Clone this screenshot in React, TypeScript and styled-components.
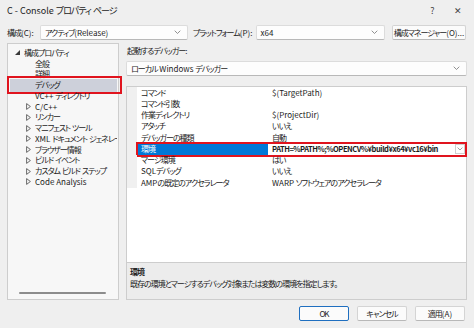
import React from 'react';
import styled, { createGlobalStyle } from 'styled-components';

const GlobalStyle = createGlobalStyle`
  html, body {
    margin: 0;
    padding: 0;
    background: #efefef;
  }
  body {
    font-family: "Noto Sans CJK JP", "Noto Sans", sans-serif;
    font-feature-settings: "palt";
    color: #1b1b1b;
  }
  * {
    box-sizing: border-box;
  }
`;

const Window = styled.div`
  width: 474px;
  height: 328px;
  background: #efefef;
  display: flex;
  flex-direction: column;
  overflow: hidden;
  font-size: 8px;
  letter-spacing: -1px;
  line-height: 1;
`;

// latin runs keep normal spacing, kana/kanji are tightened
const Latin = styled.span`
  letter-spacing: 0;
`;

const T = ({ s }: { s: string }) => (
  <>
    {s.split(/([\x20-\x7E¥]+)/).map((part, i) =>
      i % 2 ? <Latin key={i}>{part}</Latin> : part
    )}
  </>
);

const TitleBar = styled.div`
  height: 22px;
  display: flex;
  align-items: center;
  padding: 0 4px 2px 7px;
  font-size: 9px;
`;

const Title = styled.span`
  flex: 1;
`;

const CaptionButton = styled.span`
  width: 25px;
  text-align: center;
  color: #444;
  font-size: 9px;
  letter-spacing: 0;
`;

const ConfigBar = styled.div`
  height: 21px;
  display: flex;
  align-items: center;
  padding: 0 8px 0 7px;
`;

const Label = styled.span<{ $w?: number; $pad?: number }>`
  flex: none;
  ${p => (p.$w ? `width: ${p.$w}px;` : '')}
  padding: 0 ${p => (p.$w ? 0 : 3)}px 0 ${p => p.$pad ?? 0}px;
  white-space: nowrap;
`;

const Combo = styled.div<{ $w?: number; $grow?: boolean }>`
  flex: ${p => (p.$grow ? '1' : 'none')};
  ${p => (p.$grow ? '' : `width: ${p.$w ? `${p.$w}px` : '100%'};`)}
  height: 15px;
  background: #fdfdfd;
  border: 1px solid #dcdcdc;
  border-bottom-color: #b8b8b8;
  border-radius: 2px;
  display: flex;
  align-items: center;
  padding: 0 6px 0 4px;
  white-space: nowrap;
  span.txt {
    flex: 1;
  }
`;

const Button = styled.div<{ $w: number; $primary?: boolean; $gap?: number }>`
  flex: none;
  width: ${p => p.$w}px;
  height: 15px;
  margin-left: ${p => p.$gap ?? 0}px;
  background: #fbfbfb;
  border: 1px solid ${p => (p.$primary ? '#1f6fc0' : '#d4d4d4')};
  border-bottom-color: ${p => (p.$primary ? '#1f6fc0' : '#b8b8b8')};
  border-radius: 2px;
  display: flex;
  align-items: center;
  justify-content: center;
  white-space: nowrap;
`;

const Main = styled.div`
  height: 257px;
  display: flex;
  gap: 7px;
  padding: 0 7px;
`;

const TreePanel = styled.div`
  width: 112px;
  flex: none;
  background: #f7f7f7;
  border: 1px solid #cdcdcd;
  padding: 3.5px 0 5px;
  display: flex;
  flex-direction: column;
`;

const TreeRow = styled.div<{ $level: number; $selected?: boolean }>`
  position: relative;
  height: 10.75px;
  margin: 0 1px;
  display: flex;
  align-items: center;
  padding-left: ${p => 4 + p.$level * 11}px;
  white-space: nowrap;
  &::before {
    content: '';
    position: absolute;
    left: 1px;
    right: 0;
    top: -1px;
    bottom: -1px;
    background: ${p => (p.$selected ? '#cdd0da' : 'transparent')};
  }
`;

const TreeText = styled.span`
  position: relative;
  overflow: hidden;
  flex: 1;
  min-width: 0;
  line-height: 12px;
`;

const Expander = styled.span`
  position: relative;
  flex: none;
  width: 11px;
  height: 11px;
  display: flex;
  align-items: center;
  justify-content: flex-start;
  padding-left: 2px;
`;

const RedMark = styled.div<{ $t: number; $r: number; $b: number; $l: number }>`
  position: absolute;
  top: ${p => p.$t}px;
  right: ${p => p.$r}px;
  bottom: ${p => p.$b}px;
  left: ${p => p.$l}px;
  border: 2px solid #e0141e;
  pointer-events: none;
`;

const ScrollTrack = styled.div`
  margin: auto 12px 0 11px;
  height: 2px;
  background: #8c8c8c;
  border-radius: 1px;
`;

const RightPane = styled.div`
  flex: 1;
  min-width: 0;
  display: flex;
  flex-direction: column;
`;

const SectionLabel = styled.div`
  height: 15px;
  display: flex;
  align-items: center;
  padding: 0 1px;
  margin-bottom: 3px;
`;

const Grid = styled.div`
  flex: 1;
  margin-top: 10px;
  background: #fff;
  border: 1px solid #cdcdcd;
  border-bottom: none;
`;

const PropRow = styled.div`
  position: relative;
  height: 11.25px;
  display: grid;
  grid-template-columns: 10px 131px 1fr;
  align-items: stretch;
  white-space: nowrap;
`;

const Gutter = styled.div`
  background: #f0f0f0;
`;

const NameCell = styled.div<{ $selected?: boolean }>`
  display: flex;
  align-items: center;
  padding-left: 4px;
  background: ${p => (p.$selected ? '#0078d7' : 'transparent')};
  color: ${p => (p.$selected ? '#fff' : 'inherit')};
`;

const ValueCell = styled.div<{ $selected?: boolean }>`
  display: flex;
  align-items: center;
  padding: 0 1px 0 4px;
  min-width: 0;
  font-weight: ${p => (p.$selected ? 700 : 400)};
  font-size: ${p => (p.$selected ? 7.5 : 8)}px;
  span.txt {
    flex: 1;
  }
  ${Latin} {
    letter-spacing: ${p => (p.$selected ? '-0.45px' : '0')};
  }
`;

const DropBox = styled.span`
  flex: none;
  width: 10px;
  height: 10px;
  border: 1px solid #cfcfcf;
  display: flex;
  align-items: center;
  justify-content: center;
  background: #fff;
`;

const Description = styled.div`
  height: 38px;
  background: #ececec;
  border: 1px solid #cdcdcd;
  padding: 3px 3px;
  display: flex;
  flex-direction: column;
  gap: 1px;
  line-height: 11px;
  b {
    font-weight: 700;
  }
`;

const Footer = styled.div`
  flex: 1;
  display: flex;
  justify-content: flex-end;
  gap: 8px;
  padding: 6px 9px 0 0;
`;

const Chevron = ({ size = 7 }: { size?: number }) => (
  <svg width={size} height={size * 0.6} viewBox="0 0 10 6">
    <polyline points="1,1 5,5 9,1" fill="none" stroke="#7a7a7a" strokeWidth="1.2" />
  </svg>
);

const Collapsed = () => (
  <svg width="5" height="7" viewBox="0 0 5 7">
    <polygon points="0.6,0.6 4.4,3.5 0.6,6.4" fill="none" stroke="#5a5a5a" strokeWidth="0.9" />
  </svg>
);

const Expanded = () => (
  <svg width="5" height="5" viewBox="0 0 5 5">
    <polygon points="5,0 5,5 0,5" fill="#3a3a3a" />
  </svg>
);

type TreeItem = { text: string; level: number; kind?: 'open' | 'closed'; selected?: boolean };

const treeItems: TreeItem[] = [
  { text: '構成プロパティ', level: 0, kind: 'open' },
  { text: '全般', level: 1 },
  { text: '詳細', level: 1 },
  { text: 'デバッグ', level: 1, selected: true },
  { text: 'VC++ ディレクトリ', level: 1 },
  { text: 'C/C++', level: 1, kind: 'closed' },
  { text: 'リンカー', level: 1, kind: 'closed' },
  { text: 'マニフェスト ツール', level: 1, kind: 'closed' },
  { text: 'XML ドキュメント ジェネレーター', level: 1, kind: 'closed' },
  { text: 'ブラウザー情報', level: 1, kind: 'closed' },
  { text: 'ビルド イベント', level: 1, kind: 'closed' },
  { text: 'カスタム ビルド ステップ', level: 1, kind: 'closed' },
  { text: 'Code Analysis', level: 1, kind: 'closed' },
];

const props: [string, string, boolean?][] = [
  ['コマンド', '$(TargetPath)'],
  ['コマンド引数', ''],
  ['作業ディレクトリ', '$(ProjectDir)'],
  ['アタッチ', 'いいえ'],
  ['デバッガーの種類', '自動'],
  ['環境', 'PATH=%PATH%;%OPENCV%¥build¥x64¥vc16¥bin', true],
  ['マージ環境', 'はい'],
  ['SQL デバッグ', 'いいえ'],
  ['AMP の既定のアクセラレータ', 'WARP ソフトウェアのアクセラレータ'],
];

export default function App() {
  return (
    <>
      <GlobalStyle />
      <Window>
        <TitleBar>
          <Title><T s="C - Console プロパティ ページ" /></Title>
          <CaptionButton>?</CaptionButton>
          <CaptionButton>✕</CaptionButton>
        </TitleBar>

        <ConfigBar>
          <Label $w={33}><T s="構成(C):" /></Label>
          <Combo $w={148}>
            <span className="txt"><T s="アクティブ(Release)" /></span>
            <Chevron />
          </Combo>
          <Label $pad={5}><T s="プラットフォーム(P):" /></Label>
          <Combo $grow>
            <span className="txt"><T s="x64" /></span>
            <Chevron />
          </Combo>
          <Button $w={74} $gap={7}><T s="構成マネージャー(O)..." /></Button>
        </ConfigBar>

        <Main>
          <TreePanel>
            {treeItems.map(item => (
              <TreeRow key={item.text} $level={item.level} $selected={item.selected}>
                <Expander>
                  {item.kind === 'open' && <Expanded />}
                  {item.kind === 'closed' && <Collapsed />}
                </Expander>
                <TreeText><T s={item.text} /></TreeText>
                {item.selected && <RedMark $t={-4} $r={-5} $b={-3} $l={-2} />}
              </TreeRow>
            ))}
            <ScrollTrack />
          </TreePanel>

          <RightPane>
            <SectionLabel><T s="起動するデバッガー:" /></SectionLabel>
            <Combo>
              <span className="txt"><T s="ローカル Windows デバッガー" /></span>
              <Chevron />
            </Combo>
            <Grid>
              {props.map(([name, value, sel]) => (
                <PropRow key={name}>
                  <Gutter />
                  <NameCell $selected={sel}><T s={name} /></NameCell>
                  <ValueCell $selected={sel}>
                    <span className="txt"><T s={value} /></span>
                    {sel && (
                      <DropBox>
                        <Chevron size={6} />
                      </DropBox>
                    )}
                  </ValueCell>
                  {sel && <RedMark $t={-1} $r={-1} $b={-2} $l={9} />}
                </PropRow>
              ))}
            </Grid>
            <Description>
              <b><T s="環境" /></b>
              <span><T s="既存の環境とマージするデバッグ対象または変数の環境を指定します。" /></span>
            </Description>
          </RightPane>
        </Main>

        <Footer>
          <Button $w={50} $primary>OK</Button>
          <Button $w={50}><T s="キャンセル" /></Button>
          <Button $w={50}><T s="適用(A)" /></Button>
        </Footer>
      </Window>
    </>
  );
}
